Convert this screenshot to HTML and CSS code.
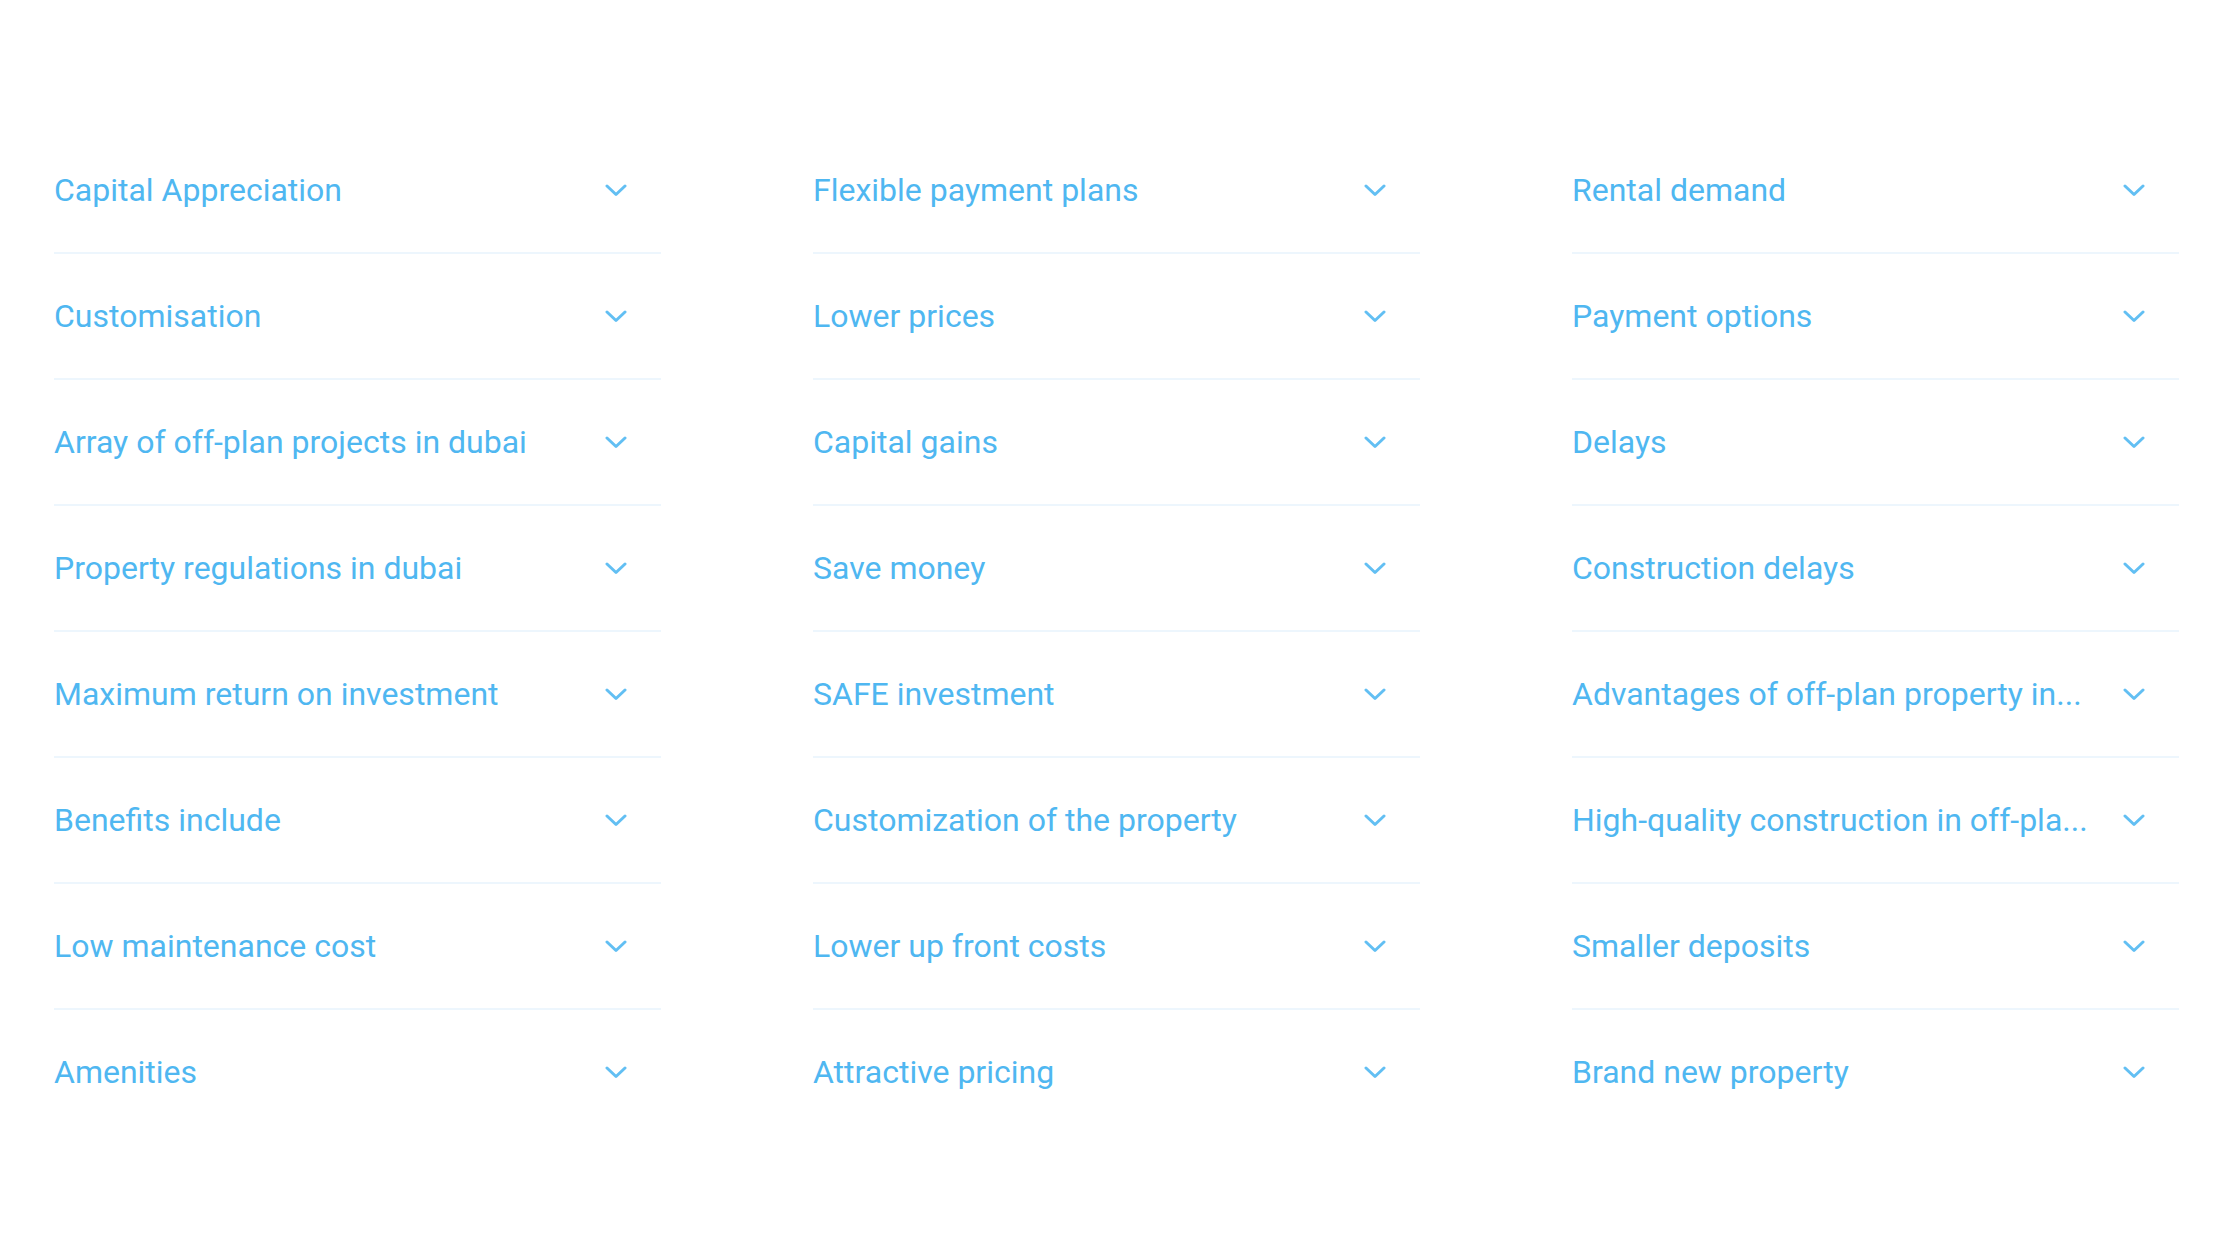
FILE: index.html
```html
<!DOCTYPE html>
<html>

<head>
  <title>Off-plan FAQ</title>
  <link rel="stylesheet" href="styles.css">
</head>

<body>
  <div class="faq-grid">
    <div class="faq-col">
      <div class="faq-item"><span class="faq-title">Capital Appreciation</span><svg class="chev" viewBox="0 0 22 13"><path d="M2 2 L11 10.5 L20 2"/></svg></div>
      <div class="faq-item"><span class="faq-title">Customisation</span><svg class="chev" viewBox="0 0 22 13"><path d="M2 2 L11 10.5 L20 2"/></svg></div>
      <div class="faq-item"><span class="faq-title">Array of off-plan projects in dubai</span><svg class="chev" viewBox="0 0 22 13"><path d="M2 2 L11 10.5 L20 2"/></svg></div>
      <div class="faq-item"><span class="faq-title">Property regulations in dubai</span><svg class="chev" viewBox="0 0 22 13"><path d="M2 2 L11 10.5 L20 2"/></svg></div>
      <div class="faq-item"><span class="faq-title">Maximum return on investment</span><svg class="chev" viewBox="0 0 22 13"><path d="M2 2 L11 10.5 L20 2"/></svg></div>
      <div class="faq-item"><span class="faq-title">Benefits include</span><svg class="chev" viewBox="0 0 22 13"><path d="M2 2 L11 10.5 L20 2"/></svg></div>
      <div class="faq-item"><span class="faq-title">Low maintenance cost</span><svg class="chev" viewBox="0 0 22 13"><path d="M2 2 L11 10.5 L20 2"/></svg></div>
      <div class="faq-item"><span class="faq-title">Amenities</span><svg class="chev" viewBox="0 0 22 13"><path d="M2 2 L11 10.5 L20 2"/></svg></div>
    </div>
    <div class="faq-col">
      <div class="faq-item"><span class="faq-title">Flexible payment plans</span><svg class="chev" viewBox="0 0 22 13"><path d="M2 2 L11 10.5 L20 2"/></svg></div>
      <div class="faq-item"><span class="faq-title">Lower prices</span><svg class="chev" viewBox="0 0 22 13"><path d="M2 2 L11 10.5 L20 2"/></svg></div>
      <div class="faq-item"><span class="faq-title">Capital gains</span><svg class="chev" viewBox="0 0 22 13"><path d="M2 2 L11 10.5 L20 2"/></svg></div>
      <div class="faq-item"><span class="faq-title">Save money</span><svg class="chev" viewBox="0 0 22 13"><path d="M2 2 L11 10.5 L20 2"/></svg></div>
      <div class="faq-item"><span class="faq-title">SAFE investment</span><svg class="chev" viewBox="0 0 22 13"><path d="M2 2 L11 10.5 L20 2"/></svg></div>
      <div class="faq-item"><span class="faq-title">Customization of the property</span><svg class="chev" viewBox="0 0 22 13"><path d="M2 2 L11 10.5 L20 2"/></svg></div>
      <div class="faq-item"><span class="faq-title">Lower up front costs</span><svg class="chev" viewBox="0 0 22 13"><path d="M2 2 L11 10.5 L20 2"/></svg></div>
      <div class="faq-item"><span class="faq-title">Attractive pricing</span><svg class="chev" viewBox="0 0 22 13"><path d="M2 2 L11 10.5 L20 2"/></svg></div>
    </div>
    <div class="faq-col">
      <div class="faq-item"><span class="faq-title">Rental demand</span><svg class="chev" viewBox="0 0 22 13"><path d="M2 2 L11 10.5 L20 2"/></svg></div>
      <div class="faq-item"><span class="faq-title">Payment options</span><svg class="chev" viewBox="0 0 22 13"><path d="M2 2 L11 10.5 L20 2"/></svg></div>
      <div class="faq-item"><span class="faq-title">Delays</span><svg class="chev" viewBox="0 0 22 13"><path d="M2 2 L11 10.5 L20 2"/></svg></div>
      <div class="faq-item"><span class="faq-title">Construction delays</span><svg class="chev" viewBox="0 0 22 13"><path d="M2 2 L11 10.5 L20 2"/></svg></div>
      <div class="faq-item"><span class="faq-title">Advantages of off-plan property in...</span><svg class="chev" viewBox="0 0 22 13"><path d="M2 2 L11 10.5 L20 2"/></svg></div>
      <div class="faq-item"><span class="faq-title">High-quality construction in off-pla...</span><svg class="chev" viewBox="0 0 22 13"><path d="M2 2 L11 10.5 L20 2"/></svg></div>
      <div class="faq-item"><span class="faq-title">Smaller deposits</span><svg class="chev" viewBox="0 0 22 13"><path d="M2 2 L11 10.5 L20 2"/></svg></div>
      <div class="faq-item"><span class="faq-title">Brand new property</span><svg class="chev" viewBox="0 0 22 13"><path d="M2 2 L11 10.5 L20 2"/></svg></div>
    </div>
  </div>
</body>

</html>
```

FILE: styles.css
```css
html,
body {
  margin: 0;
  padding: 0;
  background-color: white;
}

body {
  font-family: Roboto, "Liberation Sans", sans-serif;
}

.faq-grid {
  display: grid;
  grid-template-columns: repeat(3, 607px);
  column-gap: 152px;
  padding: 128px 0 0 54px;
}

.faq-item {
  display: flex;
  align-items: center;
  height: 124px;
  border-bottom: 2px solid #edf6fd;
  padding-right: 34px;
}

.faq-item:last-child {
  border-bottom: none;
}

.faq-title {
  flex: 1;
  min-width: 0;
  margin-right: 30px;
  color: #4fb7f1;
  font-size: 32px;
  white-space: nowrap;
  overflow: hidden;
  text-overflow: ellipsis;
}

.chev {
  width: 22px;
  height: 13px;
  flex-shrink: 0;
}

.chev path {
  fill: none;
  stroke: #62bff3;
  stroke-width: 3;
  stroke-linecap: round;
  stroke-linejoin: round;
}
```
